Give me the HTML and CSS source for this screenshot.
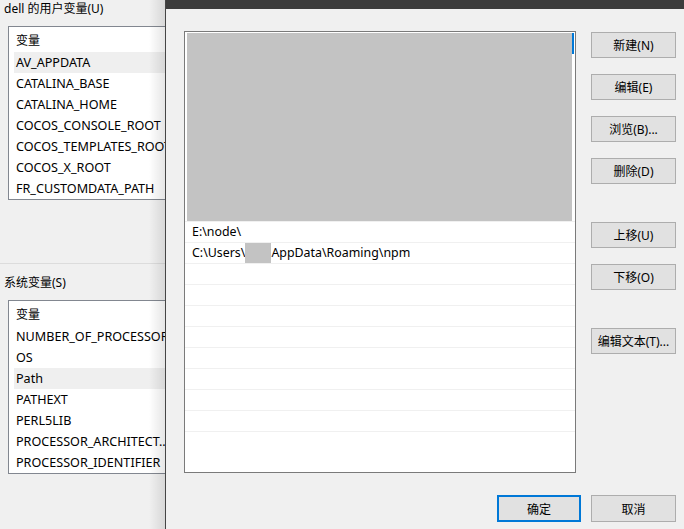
FILE: index.html
```html
<!DOCTYPE html>
<html lang="zh-CN">
<head>
  <meta charset="UTF-8" />
  <title>编辑环境变量</title>
  <link rel="stylesheet" href="styles.css">
</head>
<body>

<div class="env-window">
  <div class="group-label">dell 的用户变量(U)</div>
  <div class="var-list">
    <div class="var-head">变量</div>
    <div class="var-row selected">AV_APPDATA</div>
    <div class="var-row">CATALINA_BASE</div>
    <div class="var-row">CATALINA_HOME</div>
    <div class="var-row">COCOS_CONSOLE_ROOT</div>
    <div class="var-row">COCOS_TEMPLATES_ROOT</div>
    <div class="var-row">COCOS_X_ROOT</div>
    <div class="var-row">FR_CUSTOMDATA_PATH</div>
  </div>

  <div class="divider"></div>

  <div class="group-label sys">系统变量(S)</div>
  <div class="var-list">
    <div class="var-head">变量</div>
    <div class="var-row">NUMBER_OF_PROCESSORS</div>
    <div class="var-row">OS</div>
    <div class="var-row selected">Path</div>
    <div class="var-row">PATHEXT</div>
    <div class="var-row">PERL5LIB</div>
    <div class="var-row">PROCESSOR_ARCHITECT...</div>
    <div class="var-row">PROCESSOR_IDENTIFIER</div>
  </div>
</div>

<div class="dialog">
  <div class="title-bar"></div>
  <div class="dialog-main">
    <div class="path-list">
      <div class="path-top">
        <div class="redacted"></div>
        <div class="caret"></div>
      </div>
      <div class="path-row">E:\node\</div>
      <div class="path-row">C:\Users\<span class="blur"></span>AppData\Roaming\npm</div>
      <div class="path-row"></div>
      <div class="path-row"></div>
      <div class="path-row"></div>
      <div class="path-row"></div>
      <div class="path-row"></div>
      <div class="path-row"></div>
      <div class="path-row"></div>
      <div class="path-row"></div>
      <div class="path-row"></div>
    </div>

    <div class="side-buttons">
      <button>新建(N)</button>
      <button>编辑(E)</button>
      <button>浏览(B)...</button>
      <button>删除(D)</button>
      <button class="gap">上移(U)</button>
      <button>下移(O)</button>
      <button class="gap">编辑文本(T)...</button>
    </div>
  </div>

  <div class="dialog-footer">
    <button class="primary">确定</button>
    <button>取消</button>
  </div>
</div>

</body>
</html>
```

FILE: styles.css
```css
* {
  margin: 0;
  padding: 0;
  box-sizing: border-box;
}
body {
  width: 684px;
  height: 529px;
  overflow: hidden;
  display: flex;
  background-color: #f0f0f0;
  font-family: "Segoe UI", "Noto Sans", "Noto Sans CJK SC", sans-serif;
  font-size: 12px;
  color: #000;
}

/* background window, cut off by the dialog */
.env-window {
  width: 165px;
  flex-shrink: 0;
  overflow: hidden;
  position: relative;
}
.env-window::after {
  content: "";
  position: absolute;
  top: 0;
  right: 0;
  width: 16px;
  height: 100%;
  background: linear-gradient(to right, rgba(0,0,0,0), rgba(0,0,0,0.1));
}
.group-label {
  padding-left: 4px;
  line-height: 18px;
  white-space: nowrap;
}
.group-label.sys {
  margin-top: 10px;
}
.var-list {
  width: 220px;
  margin: 8px 0 0 8px;
  background: #fff;
  border: 1px solid #828790;
}
.var-head {
  height: 25px;
  line-height: 27px;
  padding-left: 7px;
}
.var-row {
  height: 21px;
  line-height: 21px;
  margin-left: 5px;
  padding-left: 2px;
  font-size: 12.6px;
  white-space: nowrap;
}
.var-row.selected {
  background: #efefef;
}
.divider {
  height: 1px;
  margin-top: 63px;
  background: #dcdcdc;
}

/* edit dialog */
.dialog {
  flex: 1;
  display: flex;
  flex-direction: column;
  border-left: 1px solid #454545;
}
.title-bar {
  height: 9px;
  background: #3c3c3c;
}
.dialog-main {
  display: flex;
  padding: 22px 0 0 18px;
}
.path-list {
  width: 392px;
  height: 442px;
  overflow: hidden;
  background: #fff;
  border: 1px solid #7a7a7a;
}
.path-top {
  display: flex;
  align-items: flex-start;
  height: 189px;
  padding: 1px 1px 0 2px;
}
.redacted {
  flex: 1;
  height: 188px;
  background: #c3c3c3;
}
.caret {
  width: 2px;
  height: 21px;
  background: #0078d7;
}
.path-row {
  height: 21px;
  line-height: 20px;
  padding-left: 7px;
  font-size: 12.4px;
  border-top: 1px solid #f0f0f0;
  white-space: nowrap;
}
.blur {
  display: inline-block;
  width: 26px;
  height: 20px;
  vertical-align: top;
  background: #c3c3c3;
}
.side-buttons {
  display: flex;
  flex-direction: column;
  gap: 16px;
  margin: 1px 0 0 15px;
}
.side-buttons .gap {
  margin-top: 22px;
}
button {
  width: 85px;
  height: 26px;
  font-family: inherit;
  font-size: 12px;
  color: #000;
  background: #e1e1e1;
  border: 1px solid #adadad;
}
.dialog-footer {
  display: flex;
  justify-content: flex-end;
  gap: 10px;
  margin-top: 22px;
  padding-right: 8px;
}
.dialog-footer button {
  height: 27px;
}
.dialog-footer .primary {
  width: 84px;
  border: 2px solid #0078d7;
}
```
